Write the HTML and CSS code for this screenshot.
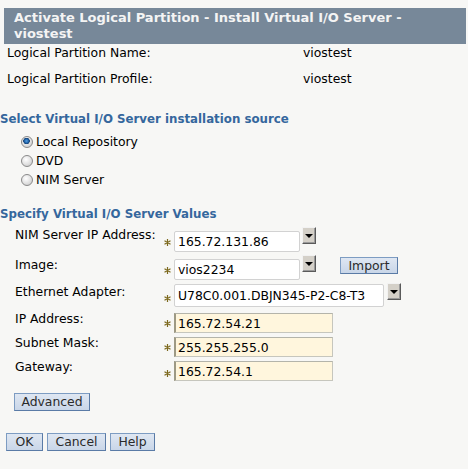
FILE: index.html
```html
<!DOCTYPE html>
<html>
<head>
<meta charset="utf-8">
<title>Activate Logical Partition</title>
<link rel="stylesheet" href="styles.css">
</head>
<body>
<div class="titlebar">Activate Logical Partition - Install Virtual I/O Server - viostest</div>
<div class="info">
  <div class="info-row"><span class="info-label">Logical Partition Name:</span><span>viostest</span></div>
  <div class="info-row"><span class="info-label">Logical Partition Profile:</span><span>viostest</span></div>
</div>
<h2 class="section">Select Virtual I/O Server installation source</h2>
<div class="radios">
  <div class="radio-row"><span class="radio checked"></span>Local Repository</div>
  <div class="radio-row"><span class="radio"></span>DVD</div>
  <div class="radio-row"><span class="radio"></span>NIM Server</div>
</div>
<h2 class="section section-values">Specify Virtual I/O Server Values</h2>
<div class="form">
  <div class="frow r1">
    <span class="flabel">NIM Server IP Address:</span>
    <span class="req"><svg width="7" height="7" viewBox="0 0 7 7"><path d="M3.5 0v7M0.5 1.75l6 3.5M0.5 5.25l6-3.5" stroke="#7d6a1f" stroke-width="1.2"/></svg></span>
    <input class="input w-short" type="text" value="165.72.131.86">
    <span class="dd"></span>
  </div>
  <div class="frow r2">
    <span class="flabel">Image:</span>
    <span class="req"><svg width="7" height="7" viewBox="0 0 7 7"><path d="M3.5 0v7M0.5 1.75l6 3.5M0.5 5.25l6-3.5" stroke="#7d6a1f" stroke-width="1.2"/></svg></span>
    <input class="input w-short" type="text" value="vios2234">
    <span class="dd"></span>
    <button class="btn btn-import">Import</button>
  </div>
  <div class="frow r3">
    <span class="flabel">Ethernet Adapter:</span>
    <span class="req"><svg width="7" height="7" viewBox="0 0 7 7"><path d="M3.5 0v7M0.5 1.75l6 3.5M0.5 5.25l6-3.5" stroke="#7d6a1f" stroke-width="1.2"/></svg></span>
    <input class="input w-long" type="text" value="U78C0.001.DBJN345-P2-C8-T3">
    <span class="dd"></span>
  </div>
  <div class="frow r4">
    <span class="flabel">IP Address:</span>
    <span class="req"><svg width="7" height="7" viewBox="0 0 7 7"><path d="M3.5 0v7M0.5 1.75l6 3.5M0.5 5.25l6-3.5" stroke="#7d6a1f" stroke-width="1.2"/></svg></span>
    <input class="input input-req" type="text" value="165.72.54.21">
  </div>
  <div class="frow r5">
    <span class="flabel">Subnet Mask:</span>
    <span class="req"><svg width="7" height="7" viewBox="0 0 7 7"><path d="M3.5 0v7M0.5 1.75l6 3.5M0.5 5.25l6-3.5" stroke="#7d6a1f" stroke-width="1.2"/></svg></span>
    <input class="input input-req" type="text" value="255.255.255.0">
  </div>
  <div class="frow r6">
    <span class="flabel">Gateway:</span>
    <span class="req"><svg width="7" height="7" viewBox="0 0 7 7"><path d="M3.5 0v7M0.5 1.75l6 3.5M0.5 5.25l6-3.5" stroke="#7d6a1f" stroke-width="1.2"/></svg></span>
    <input class="input input-req" type="text" value="165.72.54.1">
  </div>
</div>
<div class="adv-row"><button class="btn btn-adv">Advanced</button></div>
<div class="actions">
  <button class="btn btn-ok">OK</button>
  <button class="btn btn-cancel">Cancel</button>
  <button class="btn btn-help">Help</button>
</div>
</body>
</html>
```
FILE: styles.css
```css
html, body {
  margin: 0;
  padding: 0;
  background: #f7f7f5;
}
body {
  font-family: "DejaVu Sans", Verdana, sans-serif;
  font-size: 12.4px;
  color: #000;
}
.titlebar {
  margin: 8px 2px 0 4px;
  background: #778899;
  color: #f4f4f4;
  font-weight: bold;
  font-size: 13px;
  line-height: 16px;
  padding: 2px 10px;
}
.info {
  padding: 2px 0 0 7px;
}
.info-row {
  display: flex;
  height: 26px;
  line-height: 14px;
}
.info-label {
  width: 296px;
}
.section {
  margin: 14px 0 0 0;
  font-size: 11.8px;
  font-weight: bold;
  color: #35679d;
  line-height: 14px;
}
.section-values {
  margin-top: 18px;
}
.radios {
  margin-top: 6px;
  padding-left: 21px;
}
.radio-row {
  display: flex;
  align-items: center;
  height: 19px;
}
.radio {
  width: 10px;
  height: 10px;
  border-radius: 50%;
  border: 1px solid #8a8a8a;
  background: radial-gradient(circle at 40% 35%, #ffffff 0, #e6e6e6 45%, #c4c4c4 100%);
  margin-right: 3px;
  box-sizing: content-box;
}
.radio.checked {
  background:
    radial-gradient(circle at 45% 40%, #5aa0e0 0, #1f64aa 2px, #163f70 3px, transparent 3.5px),
    radial-gradient(circle at 40% 35%, #ffffff 0, #e6e6e6 45%, #c4c4c4 100%);
}
.form {
  margin-top: 6px;
  padding-left: 15px;
}
.frow {
  display: flex;
  align-items: flex-start;
}
.flabel {
  width: 149px;
  line-height: 14px;
}
.req {
  width: 10px;
  display: flex;
}
.req svg {
  display: block;
}
.input {
  box-sizing: border-box;
  margin: 0;
  font-family: "DejaVu Sans", Verdana, sans-serif;
  font-size: 12.4px;
  color: #000;
  padding: 0 3px;
  border: 1px solid #d2d2d2;
  border-radius: 2px;
  background: #fff;
  outline: none;
}
.w-short {
  width: 126px;
  height: 21px;
}
.w-long {
  width: 210px;
  height: 23px;
}
.input-req {
  width: 159px;
  height: 20px;
  background: #fff6dd;
  border: 1px solid #c6c6bd;
  border-top-color: #b4b4aa;
  border-left: 2px solid #9d9984;
  border-radius: 0;
  padding-left: 2px;
}
.dd {
  box-sizing: border-box;
  width: 14px;
  height: 17px;
  margin-left: 2px;
  background: #d4d0c8;
  border-top: 1px solid #f2f2f2;
  border-left: 1px solid #f2f2f2;
  border-right: 1px solid #5a5a5a;
  border-bottom: 1px solid #5a5a5a;
  box-shadow: inset -1px -1px 0 #9a9a9a;
  display: flex;
  justify-content: center;
  padding-top: 6px;
}
.dd::after {
  content: "";
  width: 0;
  height: 0;
  border-left: 4px solid transparent;
  border-right: 4px solid transparent;
  border-top: 4px solid #000;
}
.btn {
  box-sizing: border-box;
  height: 18px;
  margin: 0;
  padding: 0;
  font-family: "DejaVu Sans", Verdana, sans-serif;
  font-size: 12.4px;
  line-height: 16px;
  color: #2a2a2a;
  background: linear-gradient(#dfe7f2, #c9d6e8);
  border: 1px solid #7d9cc2;
  border-bottom-color: #5a7ba6;
  border-right-color: #5a7ba6;
  cursor: pointer;
}
/* row vertical offsets */
.r1 { height: 28px; }
.r1 .flabel { margin-top: 1px; }
.r1 .req { margin-top: 12px; }
.r1 .input { margin-top: 4px; }
.r2 { height: 28px; }
.r2 .flabel { margin-top: 3px; }
.r2 .req { margin-top: 12px; }
.r2 .input { margin-top: 4px; }
.btn-import {
  width: 58px;
  height: 17px;
  margin-left: 24px;
  margin-top: 2px;
  line-height: 15px;
}
.r3 { height: 29px; }
.r3 .flabel { margin-top: 2px; }
.r3 .req { margin-top: 12px; }
.r3 .input { margin-top: 1px; }
.r3 .dd { margin-left: 3px; }
.r4, .r5, .r6 { height: 24px; }
.r4 .req, .r5 .req { margin-top: 8px; }
.r6 .req { margin-top: 10px; }
.r4 .input, .r5 .input, .r6 .input { margin-top: 1px; }
.adv-row {
  margin-top: 9px;
  padding-left: 14px;
  display: flex;
}
.btn-adv { width: 76px; }
.actions {
  margin-top: 22px;
  padding-left: 6px;
  display: flex;
  gap: 4px;
}
.btn-ok { width: 37px; }
.btn-cancel { width: 59px; }
.btn-help { width: 45px; }
```
